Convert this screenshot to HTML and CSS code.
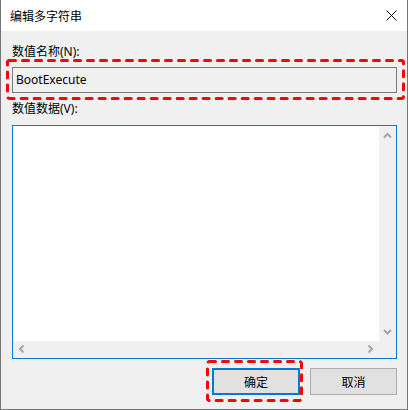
FILE: index.html
```html
<!DOCTYPE html>
<html lang="zh-CN">
<head>
<meta charset="utf-8">
<title>编辑多字符串</title>
<link rel="stylesheet" href="styles.css">
</head>
<body>
<div class="dialog">
  <div class="titlebar">
    <span class="title">编辑多字符串</span>
    <svg class="close" width="11" height="11" viewBox="0 0 11 11"><path d="M0.5 0.5 L10.5 10.5 M10.5 0.5 L0.5 10.5" stroke="#000" stroke-width="1" fill="none"/></svg>
  </div>
  <div class="content">
    <div class="label">数值名称(N):</div>
    <div class="field-wrap">
      <div class="input">BootExecute</div>
      <svg class="mark mark-name" width="399" height="41" viewBox="0 0 399 41"><rect x="1.5" y="1.5" width="396" height="38" rx="2" fill="none" stroke="#f00" stroke-width="3" stroke-dasharray="6 7" stroke-linecap="round"/></svg>
    </div>
    <div class="label label-data">数值数据(V):</div>
    <div class="textarea">
      <div class="text"></div>
      <div class="vscroll">
        <svg class="arrow" width="17" height="17" viewBox="0 0 17 17"><polyline points="5,11.5 8.5,8 12,11.5" fill="none" stroke="#a6a6a6" stroke-width="2"/></svg>
        <svg class="arrow" width="17" height="17" viewBox="0 0 17 17"><polyline points="5,6 8.5,9.5 12,6" fill="none" stroke="#a6a6a6" stroke-width="2"/></svg>
      </div>
      <div class="hscroll">
        <svg class="arrow" width="17" height="17" viewBox="0 0 17 17"><polyline points="10.5,4.5 7,8 10.5,11.5" fill="none" stroke="#a6a6a6" stroke-width="2"/></svg>
        <svg class="arrow" width="17" height="17" viewBox="0 0 17 17"><polyline points="6.5,4.5 10,8 6.5,11.5" fill="none" stroke="#a6a6a6" stroke-width="2"/></svg>
      </div>
      <div class="corner"></div>
    </div>
    <div class="buttons">
      <div class="btn-wrap">
        <button class="btn btn-default">确定</button>
        <svg class="mark mark-ok" width="97" height="42" viewBox="0 0 97 42"><rect x="1.5" y="1.5" width="94" height="39" rx="2" fill="none" stroke="#f00" stroke-width="3" stroke-dasharray="6 7" stroke-linecap="round"/></svg>
      </div>
      <button class="btn btn-cancel">取消</button>
    </div>
  </div>
</div>
</body>
</html>
```

FILE: styles.css
```css
html, body {
  margin: 0;
  padding: 0;
}

body {
  width: 408px;
  height: 410px;
  overflow: hidden;
  font-family: "Noto Sans", "Noto Sans CJK SC", sans-serif;
  font-size: 12px;
  color: #000;
}

.dialog {
  box-sizing: border-box;
  width: 408px;
  height: 410px;
  border-left: 1px solid #757575;
  border-right: 1px solid #757575;
  border-bottom: 1px solid #757575;
  display: flex;
  flex-direction: column;
  background: #f0f0f0;
}

.titlebar {
  height: 31px;
  flex: none;
  background: #fff;
  display: flex;
  align-items: center;
  justify-content: space-between;
  padding: 0 10px 0 9px;
}

.title {
  font-family: "Noto Sans CJK SC", sans-serif;
  font-size: 12px;
  line-height: 16px;
}

.close {
  display: block;
}

.content {
  flex: 1;
  display: flex;
  flex-direction: column;
  padding: 13px 10px 0 11px;
}

.label {
  line-height: 16px;
  height: 16px;
  white-space: nowrap;
}

.label-data {
  margin-top: 8px;
}

.field-wrap {
  position: relative;
  margin-top: 7px;
}

.input {
  box-sizing: border-box;
  height: 26px;
  border: 1px solid #7a7a7a;
  background: #f0f0f0;
  padding-left: 3px;
  line-height: 24px;
  font-family: "Noto Sans", sans-serif;
}

.mark {
  position: absolute;
  display: block;
  pointer-events: none;
}

.mark-name {
  left: -6px;
  top: -8px;
}

.textarea {
  box-sizing: border-box;
  margin-top: 8px;
  height: 234px;
  border: 1px solid #0078d7;
  background: #fff;
  display: grid;
  grid-template-columns: 1fr 17px;
  grid-template-rows: 1fr 17px;
}

.text {
  grid-column: 1;
  grid-row: 1;
}

.vscroll {
  grid-column: 2;
  grid-row: 1;
  background: #f0f0f0;
  display: flex;
  flex-direction: column;
  justify-content: space-between;
}

.hscroll {
  grid-column: 1;
  grid-row: 2;
  background: #f0f0f0;
  display: flex;
  justify-content: space-between;
}

.corner {
  grid-column: 2;
  grid-row: 2;
  background: #f0f0f0;
}

.arrow {
  display: block;
}

.buttons {
  margin-top: 9px;
  display: flex;
  justify-content: flex-end;
  gap: 10px;
}

.btn-wrap {
  position: relative;
}

.btn {
  box-sizing: border-box;
  height: 27px;
  margin: 0;
  padding: 0;
  background: #e1e1e1;
  border: 1px solid #adadad;
  font-family: "Noto Sans CJK SC", sans-serif;
  font-size: 12px;
  color: #000;
  display: block;
}

.btn-default {
  width: 88px;
  border: 2px solid #0078d7;
}

.btn-cancel {
  width: 87px;
}

.mark-ok {
  left: -6px;
  top: -8px;
}
```
